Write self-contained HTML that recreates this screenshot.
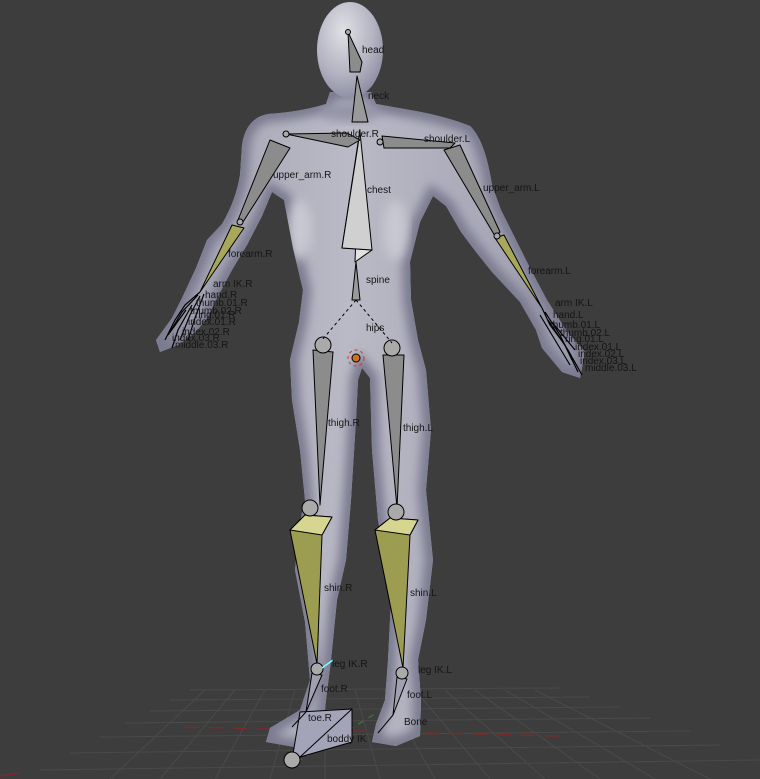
<!DOCTYPE html>
<html><head><meta charset="utf-8"><style>
html,body{margin:0;padding:0;background:#3d3d3d;}
svg{display:block}
text{font-family:"Liberation Sans",sans-serif;font-size:10px;fill:#151515;}
</style></head><body>
<svg width="760" height="779" viewBox="0 0 760 779" xmlns="http://www.w3.org/2000/svg">
<defs>
<linearGradient id="skin" x1="0" y1="0" x2="1" y2="0"><stop offset="0" stop-color="#a0a0b0"/><stop offset="0.45" stop-color="#babac6"/><stop offset="1" stop-color="#9c9cae"/></linearGradient>
<radialGradient id="headg" cx="0.4" cy="0.3" r="0.75"><stop offset="0" stop-color="#e0e0e6"/><stop offset="0.6" stop-color="#b4b4c2"/><stop offset="1" stop-color="#8a8aa0"/></radialGradient>
<filter id="bl" x="-20%" y="-20%" width="140%" height="140%"><feGaussianBlur stdDeviation="5"/></filter>
<path id="body" d="M330 92 L326 104 Q300 112 268 114 Q246 118 242 145 L240 175 Q236 200 222 224 L207 240 L196 268 L182 298 L172 318 L156 340 L160 352 L178 345 L195 333 L207 318 L217 298 L232 270 L247 245 L262 216 L272 192 L284 200 L293 248 L303 290 L299 322 L290 360 L292 400 L300 450 L305 500 L300 522 L295 570 L305 622 L310 680 L300 710 L270 728 L266 742 L300 748 L322 736 L326 700 L331 660 L337 600 L346 560 L351 500 L356 420 L358 380 L362 368 L370 378 L372 450 L378 520 L385 560 L391 600 L388 660 L385 700 L376 724 L372 742 L396 746 L420 736 L421 700 L418 660 L426 620 L433 560 L429 520 L426 490 L431 430 L426 370 L418 340 L411 300 L410 262 L420 222 L433 196 L446 206 L461 232 L476 252 L492 272 L520 302 L536 330 L542 348 L562 372 L580 378 L585 352 L566 330 L547 300 L531 270 L516 240 L501 210 L492 185 Q485 140 470 126 Q445 116 410 110 L376 104 L371 92 Z"/>
<clipPath id="bc"><use href="#body"/></clipPath>
</defs>
<rect width="760" height="779" fill="#3d3d3d"/>
<g stroke="#4a4a4a" stroke-width="1" fill="none">
<path d="M190 690 L560 688 M170 700 L590 697 M150 711 L620 707 M125 723 L650 718 M100 737 L690 731 M70 753 L720 745 M40 770 L760 760"/>
<path d="M205 690 L110 779 M235 690 L160 779 M265 690 L215 779 M295 690 L270 779 M325 690 L325 779 M355 690 L380 779 M385 690 L435 779 M415 690 L490 779 M445 690 L545 779 M475 690 L600 779 M505 690 L655 779 M535 690 L710 779"/>
</g>
<path d="M185 727 L560 736" stroke="#7a2a2a" stroke-width="1.5" stroke-dasharray="14 10"/>
<path d="M0 776 L20 773" stroke="#7a2a2a" stroke-width="1.5"/>
<path d="M297 762 L378 712" stroke="#3a7a3a" stroke-width="1.2" stroke-dasharray="6 6"/>
<use href="#body" fill="url(#skin)"/>
<g clip-path="url(#bc)">
<use href="#body" fill="none" stroke="#7a7a90" stroke-width="16" filter="url(#bl)"/>
<ellipse cx="350" cy="112" rx="30" ry="10" fill="#9494a8" filter="url(#bl)"/>
<ellipse cx="300" cy="230" rx="12" ry="30" fill="#c8c8d2" filter="url(#bl)"/>
<ellipse cx="395" cy="230" rx="12" ry="30" fill="#c8c8d2" filter="url(#bl)"/>
</g>
<ellipse cx="350" cy="50" rx="33" ry="48" fill="url(#headg)"/>
<g stroke="#000" stroke-width="1" stroke-linejoin="round">
<polygon points="348,32 362,62 360,72 350,72" fill="#8c8c8c"/>
<polygon points="357,76 352,122 368,122" fill="#9a9a9a"/>
<polygon points="360,130 342,248 372,250 355,262" fill="#e2e2e2"/>
<polygon points="342,248 360,132 372,250" fill="#d0d0d0"/>
<polygon points="356,262 352,300 360,300" fill="#9a9a9a"/>
<polygon points="286,134 347,133 360,140 348,147" fill="#8c8c8c"/>
<polygon points="382,136 384,148 450,148 455,143" fill="#8c8c8c"/>
<polygon points="270,140 290,148 243,222 238,220" fill="#8c8c8c"/>
<polygon points="444,150 460,145 500,232 495,236" fill="#8c8c8c"/>
<polygon points="232,225 244,228 200,292" fill="#a8a85a"/>
<polygon points="495,238 504,235 542,308" fill="#a8a85a"/>
<polygon points="313,350 333,352 320,505" fill="#8c8c8c"/>
<polygon points="383,355 404,355 397,508" fill="#8c8c8c"/>
<polygon points="290,530 305,515 332,517 322,535 317,664" fill="#9d9d52"/>
<polygon points="290,530 305,515 332,517 322,535" fill="#d6d690"/>
<polygon points="375,530 390,518 418,520 410,535 403,668" fill="#9d9d52"/>
<polygon points="375,530 390,518 418,520 410,535" fill="#d6d690"/>
<polygon points="312,673 322,675 306,712" fill="#a0a0b0"/>
<polygon points="397,677 407,679 393,715" fill="#a0a0b0"/>
<polygon points="300,712 352,709 352,742 300,757 292,760" fill="#a4a4b8"/>
<line x1="300" y1="757" x2="352" y2="709"/>
<line x1="306" y1="712" x2="292" y2="727"/>
<line x1="393" y1="715" x2="378" y2="733"/>
</g>
<g fill="#aaa" stroke="#000" stroke-width="1">
<circle cx="323" cy="345" r="8"/><circle cx="392" cy="348" r="8"/>
<circle cx="310" cy="508" r="8"/><circle cx="396" cy="512" r="8"/>
<circle cx="317" cy="669" r="6"/><circle cx="402" cy="673" r="6"/>
<circle cx="292" cy="760" r="8"/>
<circle cx="348" cy="32" r="2.5"/><circle cx="286" cy="134" r="3"/><circle cx="380" cy="142" r="3"/><circle cx="240" cy="222" r="3"/><circle cx="497" cy="236" r="3"/>
</g>
<g stroke="#000" stroke-width="1" stroke-dasharray="3 3"><line x1="356" y1="300" x2="322" y2="340"/><line x1="356" y1="300" x2="392" y2="343"/></g>
<circle cx="356" cy="358" r="4" fill="#d07020" stroke="#000"/>
<circle cx="356" cy="358" r="8" fill="none" stroke="#c33" stroke-dasharray="3 3"/>
<line x1="322" y1="668" x2="333" y2="660" stroke="#7ff" stroke-width="1.5"/>
<g stroke="#000" stroke-width="1.2" fill="none">
<path d="M200 292 L185 305 L175 320 L165 340 M198 295 L182 312 L170 332 M200 296 L190 315 L180 340 M204 294 L195 318 L188 340 M192 305 L178 330 L172 348 M186 310 L168 335"/>
<path d="M542 308 L550 325 L565 345 L578 372 M545 312 L560 335 L572 360 M540 315 L555 340 L570 365 M548 320 L568 350 L582 375 M552 322 L575 350"/>
</g>
<text x="362" y="53">head</text>
<text x="368" y="99">neck</text>
<text x="331" y="137">shoulder.R</text>
<text x="424" y="142">shoulder.L</text>
<text x="273" y="178">upper_arm.R</text>
<text x="367" y="193">chest</text>
<text x="483" y="191">upper_arm.L</text>
<text x="228" y="257">forearm.R</text>
<text x="528" y="274">forearm.L</text>
<text x="366" y="283">spine</text>
<text x="366" y="331">hips</text>
<text x="213" y="287">arm IK.R</text>
<text x="205" y="298">hand.R</text>
<text x="196" y="306">thumb.01.R</text>
<text x="190" y="314">thumb.02.R</text>
<text x="195" y="318">ring.01.R</text>
<text x="188" y="325">index.01.R</text>
<text x="182" y="335">index.02.R</text>
<text x="172" y="341">index.03.R</text>
<text x="175" y="348">middle.03.R</text>
<text x="555" y="306">arm IK.L</text>
<text x="553" y="318">hand.L</text>
<text x="550" y="328">thumb.01.L</text>
<text x="560" y="336">thumb.02.L</text>
<text x="565" y="342">ring.01.L</text>
<text x="575" y="350">index.01.L</text>
<text x="578" y="357">index.02.L</text>
<text x="580" y="364">index.03.L</text>
<text x="585" y="371">middle.03.L</text>
<text x="328" y="426">thigh.R</text>
<text x="403" y="431">thigh.L</text>
<text x="324" y="591">shin.R</text>
<text x="410" y="596">shin.L</text>
<text x="332" y="667">leg IK.R</text>
<text x="418" y="673">leg IK.L</text>
<text x="321" y="692">foot.R</text>
<text x="407" y="698">foot.L</text>
<text x="308" y="721">toe.R</text>
<text x="404" y="725">Bone</text>
<text x="327" y="742">boddy IK</text>
</svg>
</body></html>
